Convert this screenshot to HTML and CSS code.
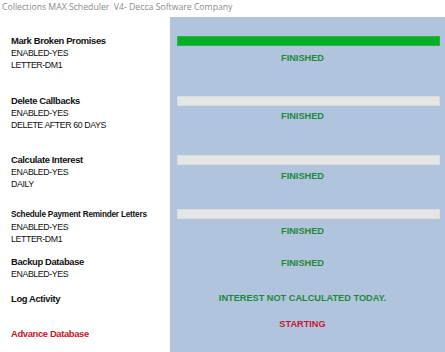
FILE: index.html
```html
<!DOCTYPE html>
<html lang="en">
<head>
  <meta charset="UTF-8" />
  <title>Collections MAX Scheduler</title>
  <link rel="stylesheet" href="styles.css">
</head>
<body>
  <div class="titlebar">Collections MAX Scheduler&nbsp; V4- Decca Software Company</div>

  <div class="main">
    <div class="tasks">
      <div class="task t1">
        <div class="name">Mark Broken Promises</div>
        <div class="opt">ENABLED-YES</div>
        <div class="opt">LETTER-DM1</div>
      </div>
      <div class="task t2">
        <div class="name">Delete Callbacks</div>
        <div class="opt">ENABLED-YES</div>
        <div class="opt">DELETE AFTER 60 DAYS</div>
      </div>
      <div class="task t3">
        <div class="name">Calculate Interest</div>
        <div class="opt">ENABLED-YES</div>
        <div class="opt">DAILY</div>
      </div>
      <div class="task t4">
        <div class="name small">Schedule Payment Reminder Letters</div>
        <div class="opt">ENABLED-YES</div>
        <div class="opt">LETTER-DM1</div>
      </div>
      <div class="task t5">
        <div class="name">Backup Database</div>
        <div class="opt">ENABLED-YES</div>
      </div>
      <div class="task t6">
        <div class="name">Log Activity</div>
      </div>
      <div class="task t7">
        <div class="name red">Advance Database</div>
      </div>
    </div>

    <div class="status">
      <div class="bar b1"><div class="fill" style="width:100%"></div></div>
      <div class="msg m1">FINISHED</div>
      <div class="bar b2"></div>
      <div class="msg m2">FINISHED</div>
      <div class="bar b3"></div>
      <div class="msg m3">FINISHED</div>
      <div class="bar b4"></div>
      <div class="msg m4">FINISHED</div>
      <div class="msg m5">FINISHED</div>
      <div class="msg m6">INTEREST NOT CALCULATED TODAY.</div>
      <div class="msg m7 red">STARTING</div>
    </div>
  </div>
</body>
</html>
```

FILE: styles.css
```css
body {
  margin: 0;
  width: 445px;
  height: 352px;
  overflow: hidden;
  background: #fff;
  font-family: "Liberation Sans", Arial, sans-serif;
}

.titlebar {
  height: 17px;
  line-height: 15px;
  padding-left: 2px;
  font-family: "Open Sans", sans-serif;
  font-size: 8.7px;
  color: #8c8c8c;
  white-space: nowrap;
}

.main {
  display: flex;
  height: 335px;
}

/* colonne de gauche */
.tasks {
  width: 170px;
  flex-shrink: 0;
  padding-left: 11px;
  padding-top: 18px;
  box-sizing: border-box;
}

.task .name,
.task .opt {
  line-height: 12px;
  height: 12px;
  white-space: nowrap;
  color: #111;
}

.name {
  font-weight: bold;
  font-size: 9.4px;
  letter-spacing: -0.35px;
}

.name.small {
  font-size: 8.2px;
  letter-spacing: -0.2px;
}

.opt {
  font-size: 8.8px;
  letter-spacing: -0.4px;
}

.t2 { margin-top: 24px; }
.t3 { margin-top: 23px; }
.t4 { margin-top: 19px; }
.t5 { margin-top: 11px; }
.t6 { margin-top: 13px; }
.t7 { margin-top: 23px; }

.task .red {
  color: #c0182a;
}

/* panneau bleu */
.status {
  flex-grow: 1;
  background: #b0c4de;
  padding: 19px 5px 0 7px;
  box-sizing: border-box;
}

.bar {
  height: 10px;
  background: #e6e6e6;
  border: 1px solid #dcdcdc;
  box-sizing: border-box;
}

.bar .fill {
  height: 100%;
  background: #06b025;
}

.b1 { border-color: #33b04a; }
.b2 { margin-top: 32px; }
.b3 { margin-top: 33px; }
.b4 { margin-top: 27px; }

.msg {
  text-align: center;
  padding-right: 12px;
  font-weight: bold;
  font-size: 9.2px;
  line-height: 12px;
  height: 12px;
  color: #1f893b;
  white-space: nowrap;
}

.m1 { margin-top: 6px; }
.m2 { margin-top: 4px; }
.m3 { margin-top: 5px; }
.m4 { margin-top: 6px; }
.m5 { margin-top: 20px; }
.m6 { margin-top: 23px; }
.m7 { margin-top: 14px; }

.msg.red {
  color: #c8182e;
}
```
